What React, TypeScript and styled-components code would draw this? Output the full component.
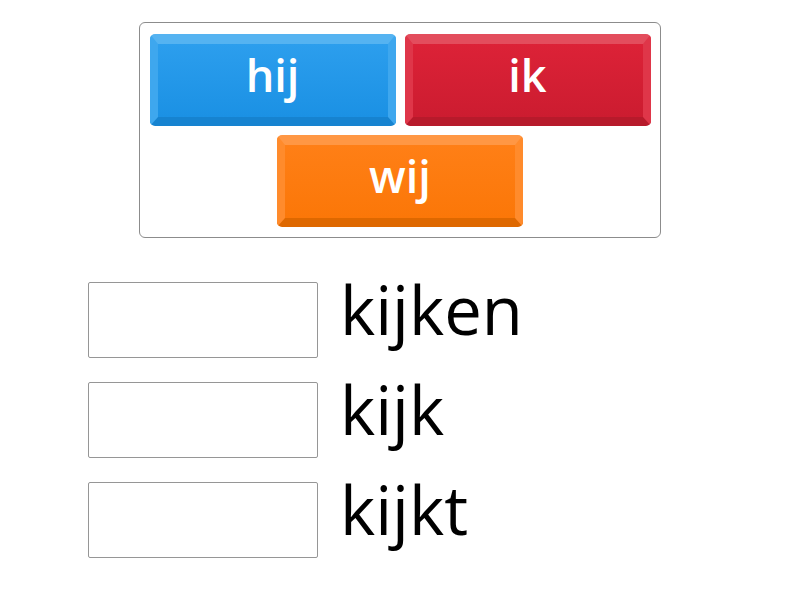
import React from 'react';
import styled, { createGlobalStyle } from 'styled-components';

const GlobalStyle = createGlobalStyle`
  html, body {
    margin: 0;
    padding: 0;
    background: #fff;
    font-family: 'Open Sans', 'Liberation Sans', sans-serif;
  }
`;

type Tone = 'blue' | 'red' | 'orange';

const tones: Record<Tone, { top: string; side: string; face: string; faceEnd: string; bottom: string }> = {
  blue: { top: '#55b3f1', side: '#3ea7ee', face: '#2c9eed', faceEnd: '#1b91e4', bottom: '#1683d0' },
  red: { top: '#e34d5d', side: '#df3649', face: '#dc2237', faceEnd: '#cc1c30', bottom: '#b71a2b' },
  orange: { top: '#ff9744', side: '#ff8b2c', face: '#ff7f16', faceEnd: '#fb7708', bottom: '#de6800' },
};

const Page = styled.div`
  width: 800px;
  height: 600px;
  padding-top: 22px;
  box-sizing: border-box;
`;

const Pool = styled.div`
  width: 522px;
  margin: 0 auto;
  box-sizing: border-box;
  border: 1px solid #8c8c8c;
  border-radius: 6px;
  padding: 11px 9px 10px;
  display: flex;
  flex-wrap: wrap;
  justify-content: center;
  gap: 9px;
`;

const Tile = styled.div<{ $tone: Tone }>`
  width: 246px;
  height: 92px;
  box-sizing: border-box;
  border-radius: 5px;
  border-style: solid;
  border-width: 10px 8px 9px 8px;
  border-top-color: ${(p) => tones[p.$tone].top};
  border-left-color: ${(p) => tones[p.$tone].side};
  border-right-color: ${(p) => tones[p.$tone].side};
  border-bottom-color: ${(p) => tones[p.$tone].bottom};
  background: linear-gradient(${(p) => tones[p.$tone].face}, ${(p) => tones[p.$tone].faceEnd});
  display: flex;
  align-items: center;
  justify-content: center;
  color: #fff;
  font-size: 45px;
  font-weight: 600;
  line-height: 1;
  padding-bottom: 12px;
`;

const Answers = styled.div`
  margin: 44px 0 0 88px;
  display: flex;
  flex-direction: column;
  gap: 24px;
`;

const Row = styled.div`
  display: flex;
  align-items: flex-start;
  gap: 22px;
`;

const Slot = styled.div`
  width: 230px;
  height: 76px;
  box-sizing: border-box;
  border: 1px solid #969696;
  border-radius: 2px;
`;

const Word = styled.span`
  font-size: 67px;
  line-height: 55px;
  color: #000;
`;

const tiles: { label: string; tone: Tone }[] = [
  { label: 'hij', tone: 'blue' },
  { label: 'ik', tone: 'red' },
  { label: 'wij', tone: 'orange' },
];

const words = ['kijken', 'kijk', 'kijkt'];

export default function App() {
  return (
    <Page>
      <GlobalStyle />
      <Pool>
        {tiles.map((t) => (
          <Tile key={t.label} $tone={t.tone}>
            {t.label}
          </Tile>
        ))}
      </Pool>
      <Answers>
        {words.map((w) => (
          <Row key={w}>
            <Slot />
            <Word>{w}</Word>
          </Row>
        ))}
      </Answers>
    </Page>
  );
}
